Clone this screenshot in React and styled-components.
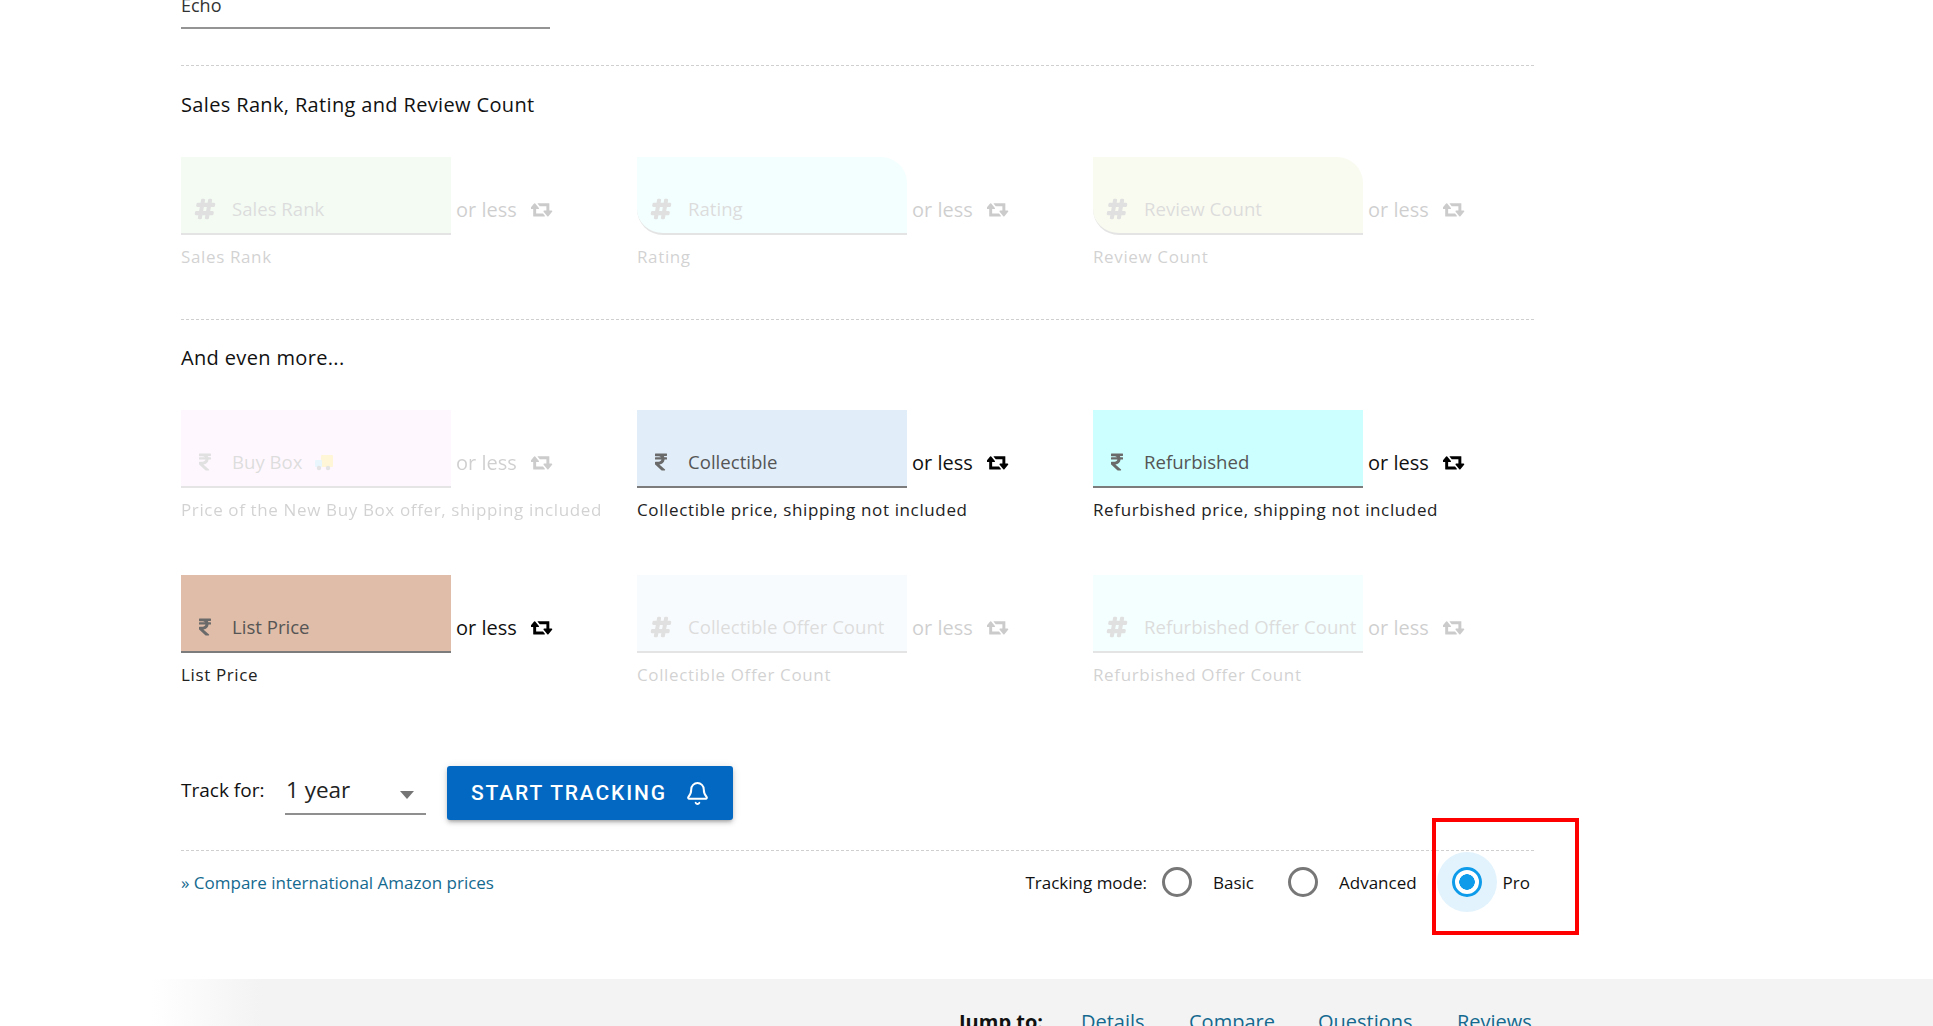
import React from "react";
import styled, { createGlobalStyle } from "styled-components";
import { FaHashtag, FaRupeeSign } from "react-icons/fa";
import { Bell } from "lucide-react";

const Global = createGlobalStyle`
  html, body { margin: 0; padding: 0; background: #fff; }
  body { font-family: "Open Sans", "Noto Sans", sans-serif; color: #111; overflow: hidden; }
`;

const Page = styled.div`
  position: relative;
  display: flex;
  flex-direction: column;
  width: 1933px;
  height: 1026px;
  overflow: hidden;
  background: #fff;
`;

const Form = styled.div`
  flex: none;
  width: 1353px;
  margin-left: 181px;
  margin-top: -12px;
`;

const NameField = styled.div`
  width: 369px;
  height: 41px;
  box-sizing: border-box;
  border-bottom: 2px solid #949494;
  font-size: 18px;
  line-height: 35px;
  color: #333;
`;

const Divider = styled.div`
  margin-top: ${(p) => p.$top || 0}px;
  border-top: 1px dashed #cfcfcf;
`;

const SectionTitle = styled.h3`
  margin: ${(p) => p.$top}px 0 ${(p) => p.$bottom}px;
  font-size: 20px;
  font-weight: 400;
  letter-spacing: 0.35px;
  line-height: 26px;
  color: #111;
`;

const FieldRow = styled.div`
  display: grid;
  grid-template-columns: repeat(3, 456px);
  margin-bottom: ${(p) => p.$bottom}px;
`;

const Cell = styled.div`
  display: flex;
  flex-direction: column;
  opacity: ${(p) => (p.$dim ? 0.2 : 1)};
`;

const InputLine = styled.div`
  display: flex;
  align-items: flex-end;
`;

const Input = styled.div`
  width: 270px;
  height: 78px;
  box-sizing: border-box;
  display: flex;
  align-items: center;
  padding: 27px 0 0 13px;
  background: ${(p) => p.$bg};
  border-bottom: 2px solid #7c7c7c;
  border-radius: ${(p) => (p.$rounded ? "0 26px 0 26px" : "0")};
  color: #555;
  font-size: 18.6px;
  white-space: nowrap;
`;

const Adorn = styled.span`
  width: 38px;
  flex: none;
  display: flex;
  padding-left: ${(p) => (p.$rupee ? 5 : 0)}px;
  box-sizing: border-box;
  color: #6a6a6a;
  svg {
    width: ${(p) => (p.$rupee ? 12 : 22)}px;
    height: ${(p) => (p.$rupee ? 20 : 22)}px;
    ${(p) => !p.$rupee && "stroke: currentColor; stroke-width: 30px;"}
  }
`;

const OrLess = styled.span`
  display: flex;
  align-items: center;
  gap: 14px;
  margin: 0 0 11px 5px;
  font-size: 20px;
  line-height: 28px;
  color: #111;
`;

const RetweetIcon = styled.svg`
  width: 22px;
  height: 14px;
  fill: #000;
`;

const Helper = styled.div`
  margin-top: 11px;
  font-size: 17px;
  letter-spacing: 0.63px;
  line-height: 22px;
  font-weight: 400;
  color: #222;
  white-space: nowrap;
`;

const Truck = styled.svg`
  width: 21px;
  height: 20px;
  margin-left: 10px;
`;

const TrackRow = styled.div`
  display: flex;
  align-items: flex-start;
  margin-top: ${(p) => p.$top}px;
  height: 54px;
`;

const TrackLabel = styled.span`
  font-size: 19px;
  line-height: 48px;
  width: 104px;
  flex: none;
  color: #111;
`;

const Select = styled.div`
  position: relative;
  width: 141px;
  height: 49px;
  box-sizing: border-box;
  border-bottom: 2px solid #8f8f8f;
  font-size: 22.5px;
  line-height: 48px;
  padding-left: 1px;
  color: #222;
  &::after {
    content: "";
    position: absolute;
    right: 12px;
    top: 25px;
    border-left: 7.5px solid transparent;
    border-right: 7.5px solid transparent;
    border-top: 8px solid #757575;
  }
`;

const TrackButton = styled.button`
  margin-left: 21px;
  width: 286px;
  height: 54px;
  border: 0;
  border-radius: 3px;
  background: #0368c2;
  color: #fff;
  display: flex;
  align-items: center;
  padding: 0 0 0 24px;
  gap: 18px;
  box-shadow: 0 3px 3px -2px rgba(0,0,0,.2), 0 3px 4px rgba(0,0,0,.14), 0 1px 8px rgba(0,0,0,.12);
  font-family: Roboto, sans-serif;
  font-size: 21px;
  font-weight: 500;
  letter-spacing: 1.85px;
  white-space: nowrap;
  svg { width: 25px; height: 25px; flex: none; }
`;

const BottomRow = styled.div`
  display: flex;
  align-items: center;
  justify-content: space-between;
  height: 60px;
  margin-top: 1px;
`;

const CompareLink = styled.a`
  font-size: 17px;
  color: #14698f;
`;

const Modes = styled.div`
  display: flex;
  align-items: center;
  margin-right: 4px;
  font-size: 17px;
  color: #111;
`;

const ModeLabel = styled.span`
  margin-left: ${(p) => p.$left}px;
  margin-right: ${(p) => p.$right}px;
`;

const Radio = styled.span`
  position: relative;
  width: 30px;
  height: 30px;
  margin-left: ${(p) => p.$left || 0}px;
  box-sizing: border-box;
  flex: none;
  border-radius: 50%;
  border: 3px solid ${(p) => (p.$on ? "#0d9bea" : "#777")};
  ${(p) =>
    p.$on &&
    `
    background: radial-gradient(circle, #0d9bea 0 7.5px, transparent 8px);
    box-shadow: 0 0 0 15px #e2f3fd;
  `}
`;

const Highlight = styled.div`
  position: absolute;
  left: 1432px;
  top: 818px;
  width: 147px;
  height: 117px;
  box-sizing: border-box;
  border: 4.5px solid #ff0000;
`;

const Footer = styled.div`
  flex: none;
  margin-top: auto;
  margin-left: 152px;
  height: 47px;
  overflow: hidden;
  background: linear-gradient(90deg, #fff 0, #f3f3f3 110px);
`;

const JumpBar = styled.nav`
  display: flex;
  padding: 30px 0 0 807px;
  font-size: 20px;
  line-height: 26px;
  white-space: nowrap;
`;

const JumpTitle = styled.b`
  color: #111;
  width: 122px;
  flex: none;
`;

const JumpLink = styled.a`
  color: #14698f;
  width: ${(p) => p.$w}px;
  flex: none;
`;

const TruckIcon = () => (
  <Truck viewBox="0 0 21 20">
    <rect x="8" y="3" width="12" height="12" rx="1" fill="#ffd23f" />
    <rect x="2" y="8" width="7" height="7" rx="1" fill="#8fd3f0" />
    <circle cx="6" cy="16" r="2.2" fill="#777" />
    <circle cx="15" cy="16" r="2.2" fill="#777" />
  </Truck>
);

const Retweet = () => (
  <RetweetIcon viewBox="0 256 1920 1120">
    <path d="M1216 1344q0 13-9.5 22.5t-22.5 9.5h-960q-8 0-13.5-2t-9-7-5.5-8-3-11.5-1-11.5v-600h-192q-26 0-45-19t-19-45q0-24 15-41l320-384q19-22 49-22t49 22l320 384q15 17 15 41 0 26-19 45t-45 19h-192v384h576q16 0 25 11l160 192q7 9 7 21zm640-416q0 24-15 41l-320 384q-20 23-49 23-29 0-49-23l-320-384q-15-17-15-41 0-26 19-45t45-19h192v-384h-576q-16 0-25-12l-160-192q-7-9-7-20 0-13 9.5-22.5t22.5-9.5h960q8 0 13.5 2t9 7 5.5 8.5 3 11.5 1 11v600h192q26 0 45 19t19 45z" />
  </RetweetIcon>
);

const Field = ({ label, help, bg, dim, rupee, rounded, extra }) => (
  <Cell $dim={dim}>
    <InputLine>
      <Input $bg={bg} $rounded={rounded}>
        <Adorn $rupee={rupee}>{rupee ? <FaRupeeSign /> : <FaHashtag />}</Adorn>
        {label}
        {extra}
      </Input>
      <OrLess>
        or less
        <Retweet />
      </OrLess>
    </InputLine>
    <Helper>{help}</Helper>
  </Cell>
);

export default function App() {
  return (
    <Page>
      <Global />
      <Form>
        <NameField>Echo</NameField>
        <Divider $top={36} />
        <SectionTitle $top={26} $bottom={39}>Sales Rank, Rating and Review Count</SectionTitle>
        <FieldRow $bottom={51}>
          <Field dim bg="#c8f0c8" label="Sales Rank" help="Sales Rank" />
          <Field dim rounded bg="#c8ffff" label="Rating" help="Rating" />
          <Field dim rounded bg="#e8ecb8" label="Review Count" help="Review Count" />
        </FieldRow>
        <Divider />
        <SectionTitle $top={25} $bottom={39}>And even more...</SectionTitle>
        <FieldRow $bottom={54}>
          <Field dim rupee bg="#f8d8f8" label="Buy Box" extra={<TruckIcon />} help="Price of the New Buy Box offer, shipping included" />
          <Field rupee bg="#e1eefa" label="Collectible" help="Collectible price, shipping not included" />
          <Field rupee bg="#ccffff" label="Refurbished" help="Refurbished price, shipping not included" />
        </FieldRow>
        <FieldRow $bottom={0}>
          <Field rupee bg="#e0bda8" label="List Price" help="List Price" />
          <Field dim bg="#e1eefa" label="Collectible Offer Count" help="Collectible Offer Count" />
          <Field dim bg="#ccffff" label="Refurbished Offer Count" help="Refurbished Offer Count" />
        </FieldRow>
        <TrackRow $top={80}>
          <TrackLabel>Track for:</TrackLabel>
          <Select>1 year</Select>
          <TrackButton>
            START TRACKING
            <Bell strokeWidth={1.9} />
          </TrackButton>
        </TrackRow>
        <Divider $top={30} />
        <BottomRow>
          <CompareLink>» Compare international Amazon prices</CompareLink>
          <Modes>
            <span>Tracking mode:</span>
            <Radio $left={15} />
            <ModeLabel $left={21} $right={34}>Basic</ModeLabel>
            <Radio />
            <ModeLabel $left={21} $right={35}>Advanced</ModeLabel>
            <Radio $on />
            <ModeLabel $left={21} $right={0}>Pro</ModeLabel>
          </Modes>
        </BottomRow>
      </Form>
      <Footer>
        <JumpBar>
          <JumpTitle>Jump to:</JumpTitle>
          <JumpLink $w={108}>Details</JumpLink>
          <JumpLink $w={129}>Compare</JumpLink>
          <JumpLink $w={139}>Questions</JumpLink>
          <JumpLink $w={80}>Reviews</JumpLink>
        </JumpBar>
      </Footer>
      <Highlight />
    </Page>
  );
}
